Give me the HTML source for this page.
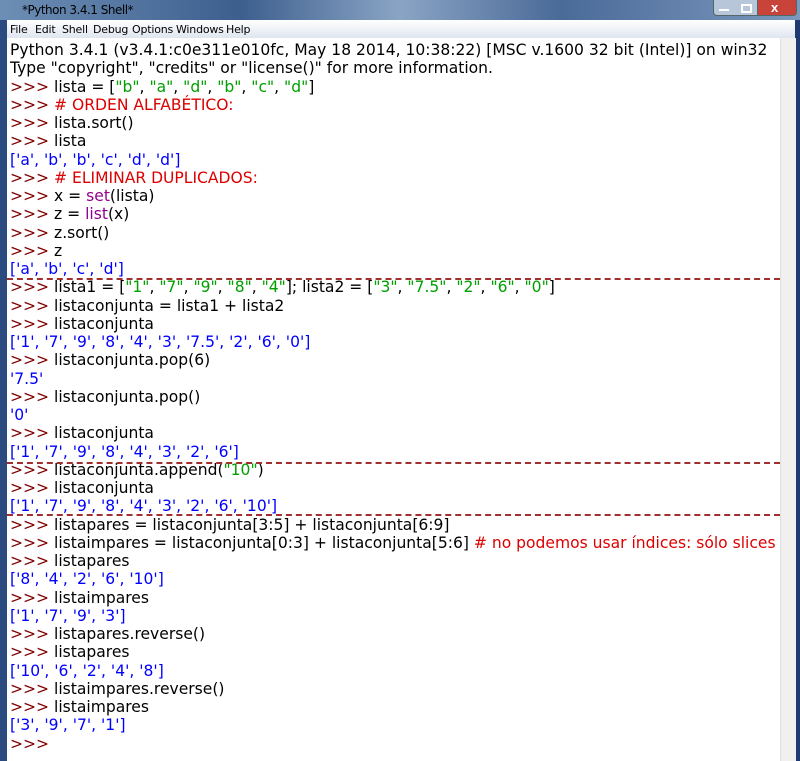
<!DOCTYPE html>
<html><head><meta charset="utf-8"><style>
body{margin:0;width:800px;height:761px;overflow:hidden;background:#fff;position:relative;font-family:"DejaVu Sans","Liberation Sans",sans-serif}
#title{position:absolute;left:0;top:0;width:800px;height:20px;background:linear-gradient(90deg,#6d8fb5,#3d5f8e 30%,#8aa4c4 50%,#4a6a98 70%,#7b98bd);}
#title span.t{position:absolute;left:22px;top:3px;font:12px "DejaVu Sans",sans-serif;letter-spacing:-0.5px;color:#000}
#menu{position:absolute;left:7px;top:20px;width:788px;height:18px;background:linear-gradient(#fff,#dfe5f0);font:11px "DejaVu Sans",sans-serif;letter-spacing:-0.2px}
#menu span{position:absolute;top:3px}
#lb{position:absolute;left:0;top:20px;width:7px;height:741px;background:#2b4a80}
#rb{position:absolute;left:795px;top:20px;width:5px;height:741px;background:#1f3a72}
#sb{position:absolute;left:780px;top:38px;width:15px;height:723px;background:#f0f0f0;border-left:1px solid #e0e0e0}
#txt{position:absolute;left:10px;top:41px;font-size:15.55px;line-height:18.25px;white-space:pre;color:#000}
.p{color:#800000}.s{color:#00a000}.o{color:#0000ff}.c{color:#dd0000}.b{color:#900090}
.d{position:absolute;left:7px;width:773px;height:0;border-top:2px dashed #a03030}
</style></head><body>
<div id="title"><span class="t">*Python 3.4.1 Shell*</span>
<div style="position:absolute;left:713px;top:0;width:22px;height:15px;background:#b8c6da;border:1px solid #566;border-top:0;border-radius:0 0 0 4px"></div>
<div style="position:absolute;left:736px;top:0;width:21px;height:15px;background:#b8c6da;border-bottom:1px solid #566"></div>
<div style="position:absolute;left:757px;top:0;width:38px;height:15px;background:#c8443a;border:1px solid #566;border-top:0;border-radius:0 0 4px 0"></div>
<div style="position:absolute;left:719px;top:9px;width:10px;height:2px;background:#fff"></div>
<div style="position:absolute;left:741px;top:4px;width:7px;height:5px;border:2px solid #fff;border-top-width:2px"></div>
<span style="position:absolute;left:771px;top:0px;color:#fff;font:bold 13px 'Liberation Sans',sans-serif">x</span></div>
<div id="lb"></div><div id="rb"></div>
<div id="menu"><span style="left:3px">File</span><span style="left:28px">Edit</span><span style="left:55px">Shell</span><span style="left:86px">Debug</span><span style="left:125px">Options</span><span style="left:169px">Windows</span><span style="left:219px">Help</span></div>
<div id="sb"></div>
<div id="txt">Python 3.4.1 (v3.4.1:c0e311e010fc, May 18 2014, 10:38:22) [MSC v.1600 32 bit (Intel)] on win32
Type "copyright", "credits" or "license()" for more information.
<span class="p">&gt;&gt;&gt; </span>lista = [<span class="s">"b"</span>, <span class="s">"a"</span>, <span class="s">"d"</span>, <span class="s">"b"</span>, <span class="s">"c"</span>, <span class="s">"d"</span>]
<span class="p">&gt;&gt;&gt; </span><span class="c"># ORDEN ALFABÉTICO:</span>
<span class="p">&gt;&gt;&gt; </span>lista.sort()
<span class="p">&gt;&gt;&gt; </span>lista
<span class="o">['a', 'b', 'b', 'c', 'd', 'd']</span>
<span class="p">&gt;&gt;&gt; </span><span class="c"># ELIMINAR DUPLICADOS:</span>
<span class="p">&gt;&gt;&gt; </span>x = <span class="b">set</span>(lista)
<span class="p">&gt;&gt;&gt; </span>z = <span class="b">list</span>(x)
<span class="p">&gt;&gt;&gt; </span>z.sort()
<span class="p">&gt;&gt;&gt; </span>z
<span class="o">['a', 'b', 'c', 'd']</span>
<span class="p">&gt;&gt;&gt; </span>lista1 = [<span class="s">"1"</span>, <span class="s">"7"</span>, <span class="s">"9"</span>, <span class="s">"8"</span>, <span class="s">"4"</span>]; lista2 = [<span class="s">"3"</span>, <span class="s">"7.5"</span>, <span class="s">"2"</span>, <span class="s">"6"</span>, <span class="s">"0"</span>]
<span class="p">&gt;&gt;&gt; </span>listaconjunta = lista1 + lista2
<span class="p">&gt;&gt;&gt; </span>listaconjunta
<span class="o">['1', '7', '9', '8', '4', '3', '7.5', '2', '6', '0']</span>
<span class="p">&gt;&gt;&gt; </span>listaconjunta.pop(6)
<span class="o">'7.5'</span>
<span class="p">&gt;&gt;&gt; </span>listaconjunta.pop()
<span class="o">'0'</span>
<span class="p">&gt;&gt;&gt; </span>listaconjunta
<span class="o">['1', '7', '9', '8', '4', '3', '2', '6']</span>
<span class="p">&gt;&gt;&gt; </span>listaconjunta.append(<span class="s">"10"</span>)
<span class="p">&gt;&gt;&gt; </span>listaconjunta
<span class="o">['1', '7', '9', '8', '4', '3', '2', '6', '10']</span>
<span class="p">&gt;&gt;&gt; </span>listapares = listaconjunta[3:5] + listaconjunta[6:9]
<span class="p">&gt;&gt;&gt; </span>listaimpares = listaconjunta[0:3] + listaconjunta[5:6] <span class="c"># no podemos usar índices: sólo slices</span>
<span class="p">&gt;&gt;&gt; </span>listapares
<span class="o">['8', '4', '2', '6', '10']</span>
<span class="p">&gt;&gt;&gt; </span>listaimpares
<span class="o">['1', '7', '9', '3']</span>
<span class="p">&gt;&gt;&gt; </span>listapares.reverse()
<span class="p">&gt;&gt;&gt; </span>listapares
<span class="o">['10', '6', '2', '4', '8']</span>
<span class="p">&gt;&gt;&gt; </span>listaimpares.reverse()
<span class="p">&gt;&gt;&gt; </span>listaimpares
<span class="o">['3', '9', '7', '1']</span>
<span class="p">&gt;&gt;&gt; </span></div>
<div class="d" style="top:278px"></div>
<div class="d" style="top:462px"></div>
<div class="d" style="top:514px"></div>
</body></html>
